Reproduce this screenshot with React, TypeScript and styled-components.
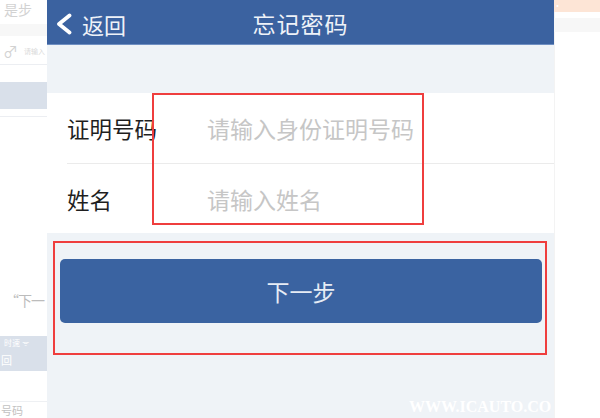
import React from "react";
import styled, { createGlobalStyle } from "styled-components";

const GlobalStyle = createGlobalStyle`
  html, body {
    margin: 0;
    padding: 0;
    background: #ffffff;
  }
  body {
    font-family: "Noto Sans CJK SC", "Noto Sans", sans-serif;
  }
`;

const fields = [
  { label: "证明号码", placeholder: "请输入身份证明号码" },
  { label: "姓名", placeholder: "请输入姓名" },
];

export default function App() {
  return (
    <>
      <GlobalStyle />
      <Page>
        <LeftStrip>
          <FadedHeading>是步</FadedHeading>
          <FadedBand />
          <GenderRow>
            <span>♂</span>
            <small>请输入</small>
          </GenderRow>
          <ThinLine $top={6} />
          <GreyBar $top={18} $height={30} />
          <ThinLine $top={7} />
          <QuoteText>“下一</QuoteText>
          <GreyBar $top={27} $height={40}>
            <StatusText>时速 ᯤ</StatusText>
            <StatusText>回</StatusText>
          </GreyBar>
          <FadedLabel>号码</FadedLabel>
        </LeftStrip>

        <Phone>
          <NavBar>
            <BackButton>
              <svg width="16" height="22" viewBox="0 0 16 22">
                <polyline
                  points="13.5,2.5 3,11 13.5,19.5"
                  fill="none"
                  stroke="#ffffff"
                  strokeWidth="3.8"
                  strokeLinecap="round"
                  strokeLinejoin="round"
                />
              </svg>
              <span>返回</span>
            </BackButton>
            <Title>忘记密码</Title>
            <span />
          </NavBar>

          <FormCard>
            {fields.map((f, i) => (
              <FieldRow key={f.label} $divider={i > 0}>
                <Label>{f.label}</Label>
                <Placeholder>{f.placeholder}</Placeholder>
              </FieldRow>
            ))}
          </FormCard>

          <NextButton>下一步</NextButton>

          <Watermark>WWW.ICAUTO.CO</Watermark>
        </Phone>

        <RightStrip>
          <OrangeBar>··</OrangeBar>
          <FadedBand />
        </RightStrip>

        <Annotation $left={152} $top={93} $width={272} $height={132} />
        <Annotation $left={53} $top={241} $width={494} $height={114} />
      </Page>
    </>
  );
}

const Page = styled.div`
  position: relative;
  display: flex;
  width: 600px;
  height: 418px;
  overflow: hidden;
  background: #ffffff;
`;

const LeftStrip = styled.div`
  width: 47px;
  flex-shrink: 0;
  display: flex;
  flex-direction: column;
  overflow: hidden;
  background: #ffffff;
`;

const FadedHeading = styled.div`
  height: 18px;
  padding-left: 4px;
  font-size: 14px;
  line-height: 18px;
  color: #d2d2d2;
  white-space: nowrap;
`;

const FadedBand = styled.div`
  margin-top: 6px;
  height: 14px;
  background: #f7f7f7;
`;

const GenderRow = styled.div`
  display: flex;
  align-items: center;
  gap: 6px;
  margin-top: 8px;
  padding-left: 3px;
  height: 14px;
  white-space: nowrap;

  & > span {
    font-size: 15px;
    color: #d2d2d2;
  }
  & > small {
    font-size: 7px;
    color: #dadada;
  }
`;

const ThinLine = styled.div<{ $top: number }>`
  margin-top: ${(p) => p.$top}px;
  height: 1px;
  background: #eceef2;
`;

const GreyBar = styled.div<{ $top: number; $height: number }>`
  margin-top: ${(p) => p.$top}px;
  height: ${(p) => p.$height}px;
  background: #d9e0ea;
  display: flex;
  flex-direction: column;
  justify-content: space-between;
  padding: 2px 0 6px;
  box-sizing: border-box;
`;

const StatusText = styled.span`
  font-size: 8px;
  line-height: 10px;
  color: #ffffff;
  padding-left: 4px;
  white-space: nowrap;

  &:last-child {
    font-size: 11px;
    padding-left: 1px;
  }
`;

const QuoteText = styled.div`
  margin-top: 175px;
  padding-left: 5px;
  font-size: 14px;
  line-height: 18px;
  letter-spacing: -1px;
  color: #bcbcbc;
  white-space: nowrap;
`;

const FadedLabel = styled.div`
  margin-top: 30px;
  padding-left: 1px;
  font-size: 11px;
  color: #c2c2c2;
  white-space: nowrap;
  border-top: 1px solid #eef0f3;
`;

const Phone = styled.div`
  position: relative;
  width: 507px;
  flex-shrink: 0;
  display: flex;
  flex-direction: column;
  background: #eff3f7;
  overflow: hidden;
`;

const NavBar = styled.div`
  height: 45px;
  display: grid;
  grid-template-columns: 1fr auto 1fr;
  align-items: center;
  padding-bottom: 12px;
  box-sizing: border-box;
  background: #3b62a0;
  border-bottom: 1px solid #6f8fc2;
  color: #ffffff;
`;

const BackButton = styled.div`
  display: flex;
  align-items: center;
  gap: 10px;
  padding-left: 9px;
  padding-top: 12px;
  font-size: 22px;
  line-height: 22px;
  color: #eef2f8;
`;

const Title = styled.div`
  padding-top: 12px;
  font-size: 23px;
  line-height: 23px;
  letter-spacing: 1px;
  color: #eef2f8;
`;

const FormCard = styled.div`
  margin-top: 48px;
  background: #ffffff;
  display: flex;
  flex-direction: column;
`;

const FieldRow = styled.div<{ $divider: boolean }>`
  height: 70px;
  display: flex;
  align-items: center;
  margin-left: 20px;
  border-top: ${(p) => (p.$divider ? "1px solid #ebebeb" : "none")};
  box-sizing: border-box;
`;

const Label = styled.span`
  width: 140px;
  font-size: 22.5px;
  color: #1f1f1f;
`;

const Placeholder = styled.span`
  font-size: 23px;
  color: #c6c6c6;
`;

const NextButton = styled.div`
  margin: 26px 12px 0 13px;
  height: 64px;
  border-radius: 5px;
  background: #3a63a1;
  display: flex;
  align-items: center;
  justify-content: center;
  font-size: 23px;
  color: #e6ecf5;
`;

const Watermark = styled.div`
  position: absolute;
  left: 362px;
  bottom: 2px;
  font-family: "Liberation Serif", serif;
  font-weight: 700;
  font-size: 16px;
  color: #ffffff;
  white-space: nowrap;
`;

const RightStrip = styled.div`
  flex: 1;
  display: flex;
  flex-direction: column;
  background: #ffffff;
  border-left: 18px solid #ffffff;
  box-shadow: inset 1px 0 0 #f3f3f3;
  margin-left: -18px;
  overflow: hidden;
`;

const OrangeBar = styled.div`
  height: 12px;
  margin-left: -18px;
  background: #fde5d6;
  font-size: 9px;
  line-height: 12px;
  color: #ffffff;
  padding-left: 8px;
  white-space: nowrap;
`;

const Annotation = styled.div<{
  $left: number;
  $top: number;
  $width: number;
  $height: number;
}>`
  position: absolute;
  left: ${(p) => p.$left}px;
  top: ${(p) => p.$top}px;
  width: ${(p) => p.$width}px;
  height: ${(p) => p.$height}px;
  box-sizing: border-box;
  border: 2px solid #ef3e3e;
  pointer-events: none;
`;
